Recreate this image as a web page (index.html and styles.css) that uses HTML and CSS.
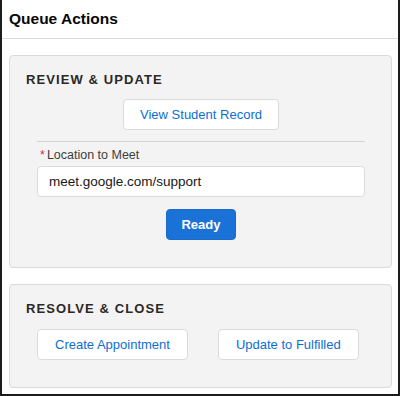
FILE: index.html
```html
<!DOCTYPE html>
<html lang="en">
<head>
  <meta charset="UTF-8" />
  <title>Queue Actions</title>
  <link rel="stylesheet" href="styles.css">
</head>
<body>
  <div class="frame">

    <!-- Header -->
    <div class="header">
      <h1>Queue Actions</h1>
    </div>

    <!-- Review & Update -->
    <section class="card">
      <h2>Review &amp; Update</h2>
      <div class="card-body">
        <div class="center">
          <button class="btn">View Student Record</button>
        </div>
        <hr class="divider" />
        <label class="field-label" for="location"><span class="req">*</span>Location to Meet</label>
        <input type="text" id="location" value="meet.google.com/support" />
        <div class="center">
          <button class="btn btn-brand">Ready</button>
        </div>
      </div>
    </section>

    <!-- Resolve & Close -->
    <section class="card">
      <h2>Resolve &amp; Close</h2>
      <div class="card-body">
        <div class="btn-row">
          <button class="btn">Create Appointment</button>
          <button class="btn">Update to Fulfilled</button>
        </div>
      </div>
    </section>

  </div>
</body>
</html>
```

FILE: styles.css
```css
body {
  margin: 0;
  font-family: 'Liberation Sans', Arial, sans-serif;
  color: #181818;
  background: white;
}

.frame {
  width: 400px;
  height: 396px;
  box-sizing: border-box;
  border: 2px solid #1c1c1c;
  border-top: none;
  overflow: hidden;
}

.header {
  height: 38px;
  border-bottom: 1px solid #dddbda;
  padding-left: 7px;
  display: flex;
  align-items: center;
}

h1 {
  margin: 0;
  font-size: 15.5px;
  font-weight: bold;
  color: #080707;
}

.card {
  background: #f3f3f3;
  border: 1px solid #dddbda;
  border-radius: 4px;
  margin: 16px 6px 0 7px;
  padding: 16px 16px 27px 16px;
}

.card h2 {
  margin: 0;
  font-size: 13px;
  line-height: 16px;
  font-weight: bold;
  text-transform: uppercase;
  letter-spacing: 1.1px;
  color: #2b2826;
}

.card-body {
  padding: 0 10px 0 11px;
}

.center {
  text-align: center;
}

.btn {
  font-family: inherit;
  font-size: 13px;
  background: white;
  color: #0b6fd1;
  border: 1px solid #dddbda;
  border-radius: 4px;
  padding: 0 16px;
  height: 31px;
  cursor: pointer;
}

.card-body > .center:first-child .btn {
  margin-top: 11px;
}

.btn-brand {
  background: #1b72d6;
  border-color: #1b6acb;
  color: white;
  font-weight: bold;
  padding: 0 14px;
  margin-top: 12px;
}

.divider {
  border: none;
  border-top: 1px solid #d4d4d4;
  margin: 11px 0 5px 0;
}

.field-label {
  display: block;
  font-size: 12.5px;
  line-height: 16px;
  color: #3e3e3c;
  margin-bottom: 3px;
}

.req {
  color: #c23934;
  margin: 0 2px 0 3px;
}

input {
  width: 100%;
  box-sizing: border-box;
  height: 31px;
  padding: 0 11px;
  border: 1px solid #dddbda;
  border-radius: 4px;
  font-family: inherit;
  font-size: 13.5px;
  color: #181818;
  background: white;
}

.btn-row {
  display: flex;
  gap: 30px;
  margin-top: 12px;
}

.btn-row .btn {
  padding: 0 17px;
}
```
